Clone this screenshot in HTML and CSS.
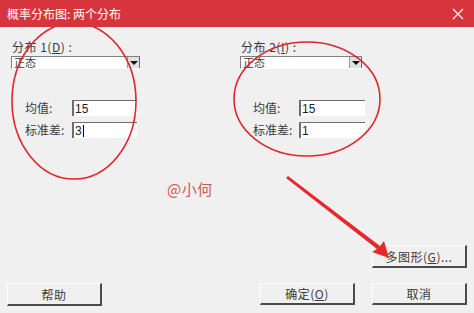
FILE: index.html
```html
<!DOCTYPE html>
<html lang="zh">
<head>
<meta charset="utf-8">
<link rel="stylesheet" href="styles.css">
</head>
<body>
<div class="window">
  <div class="titlebar">
    <span class="title">概率分布图: 两个分布</span>
    <svg class="close" width="12" height="12" viewBox="0 0 12 12"><path d="M1 1 L11 11 M11 1 L1 11" stroke="#fff" stroke-width="1.1" fill="none"/></svg>
  </div>
  <div class="content">
    <div class="columns">
      <div class="col col-left">
        <div class="dlabel">分布 1(<u>D</u>)&nbsp;:</div>
        <div class="select select-left"><span class="sel-text">正态</span><span class="sel-btn"><span class="tri"></span></span></div>
        <div class="fields fields-left">
          <span class="flabel">均值:</span><span class="input">15</span>
          <span class="flabel">标准差:</span><span class="input">3<span class="caret"></span></span>
        </div>
      </div>
      <div class="col col-right">
        <div class="dlabel">分布 2(<u>I</u>)&nbsp;:</div>
        <div class="select select-right"><span class="sel-text">正态</span><span class="sel-btn"><span class="tri"></span></span></div>
        <div class="fields fields-right">
          <span class="flabel">均值:</span><span class="input">15</span>
          <span class="flabel">标准差:</span><span class="input">1</span>
        </div>
      </div>
    </div>
    <div class="multi-row">
      <button class="btn">多图形(<u>G</u>)...</button>
    </div>
    <div class="bottom-row">
      <button class="btn">帮助</button>
      <div class="spacer"></div>
      <button class="btn">确定(<u>O</u>)</button>
      <button class="btn">取消</button>
    </div>
    <div class="watermark">@小何</div>
    <svg class="annot" width="474" height="286" viewBox="0 27 474 286">
      <ellipse cx="74" cy="101" rx="62" ry="78" fill="none" stroke="#e0262b" stroke-width="1.6"/>
      <ellipse cx="307" cy="99" rx="73" ry="57" fill="none" stroke="#e0262b" stroke-width="1.6"/>
      <polygon points="286,178 288,176 380,246 384,241 389,258 372,252 377,249" fill="#e8282c"/>
    </svg>
  </div>
</div>
</body>
</html>
```
FILE: styles.css
```css
* { box-sizing: border-box; }
html, body { margin: 0; padding: 0; }
body {
  width: 474px;
  height: 313px;
  overflow: hidden;
  background: #f0f0f0;
  font-family: "Noto Sans CJK SC", "DejaVu Sans", sans-serif;
  font-size: 12px;
  color: #3a3a3a;
}
.window { width: 474px; height: 313px; display: flex; flex-direction: column; }
.titlebar {
  height: 27px;
  background: #d7353d;
  color: #fff;
  display: flex;
  align-items: center;
  padding: 0 10px 0 7px;
  flex: none;
}
.title { font-size: 12px; line-height: 14px; flex: 1; }
.close { display: block; }
.content {
  position: relative;
  flex: 1;
  display: flex;
  flex-direction: column;
}
.columns {
  display: flex;
  padding: 12px 0 0 11px;
}
.col-left { width: 229px; }
.col-right { width: 140px; }
.dlabel { line-height: 15px; height: 17px; padding-left: 1px; letter-spacing: 0.5px; }
.dlabel u { text-decoration: underline; }
.select {
  height: 13px;
  background: #fff;
  border-top: 1px solid #808080;
  border-left: 1px solid #808080;
  border-bottom: 1px solid #fff;
  display: flex;
  align-items: stretch;
}
.select-left { width: 129px; }
.select-right { width: 122px; }
.sel-text { flex: 1; line-height: 11px; padding-left: 2px; font-size: 11px; }
.sel-btn {
  width: 13px;
  background: #e1e1e1;
  border-left: 1px solid #9a9a9a;
  border-right: 1px solid #6a6a6a;
  display: flex;
  align-items: center;
  justify-content: center;
}
.tri {
  width: 0; height: 0;
  border-left: 4px solid transparent;
  border-right: 4px solid transparent;
  border-top: 4px solid #111;
}
.fields {
  display: grid;
  row-gap: 6px;
  margin-top: 31px;
  align-items: center;
}
.fields-left { grid-template-columns: 47px 65px; padding-left: 14px; }
.fields-right { grid-template-columns: 46px 66px; padding-left: 13px; }
.flabel { line-height: 16px; }
.input {
  height: 16px;
  background: #fff;
  border-top: 1px solid #6d6d6d;
  border-left: 2px solid #6d6d6d;
  font-family: "Liberation Sans", Arial, sans-serif;
  font-size: 12px;
  line-height: 14px;
  padding-left: 1px;
  color: #222;
  display: flex;
  align-items: center;
}
.caret { width: 1px; height: 12px; background: #000; margin-left: 1px; }
.multi-row {
  display: flex;
  justify-content: flex-end;
  padding-right: 7px;
  margin-top: 107px;
}
.btn {
  width: 95px;
  height: 23px;
  margin: 0;
  padding: 0;
  background: #f0f0f0;
  border-top: 1px solid #fff;
  border-left: 1px solid #fff;
  border-right: 2px solid #4a4a4a;
  border-bottom: 2px solid #4a4a4a;
  font-family: "Noto Sans CJK SC", "DejaVu Sans", sans-serif;
  font-size: 12px;
  color: #3a3a3a;
  letter-spacing: 0.5px;
}
.btn u { text-decoration: underline; }
.bottom-row {
  display: flex;
  gap: 17px;
  padding: 0 7px;
  margin-top: 15px;
}
.bottom-row .btn { height: 22px; }
.bottom-row .btn:first-child { height: 23px; }
.spacer { flex: 1; }
.watermark {
  position: absolute;
  left: 167px;
  top: 151px;
  font-size: 15px;
  color: #d45555;
  letter-spacing: 0.5px;
}
.annot { position: absolute; left: 0; top: 0; pointer-events: none; }
```
